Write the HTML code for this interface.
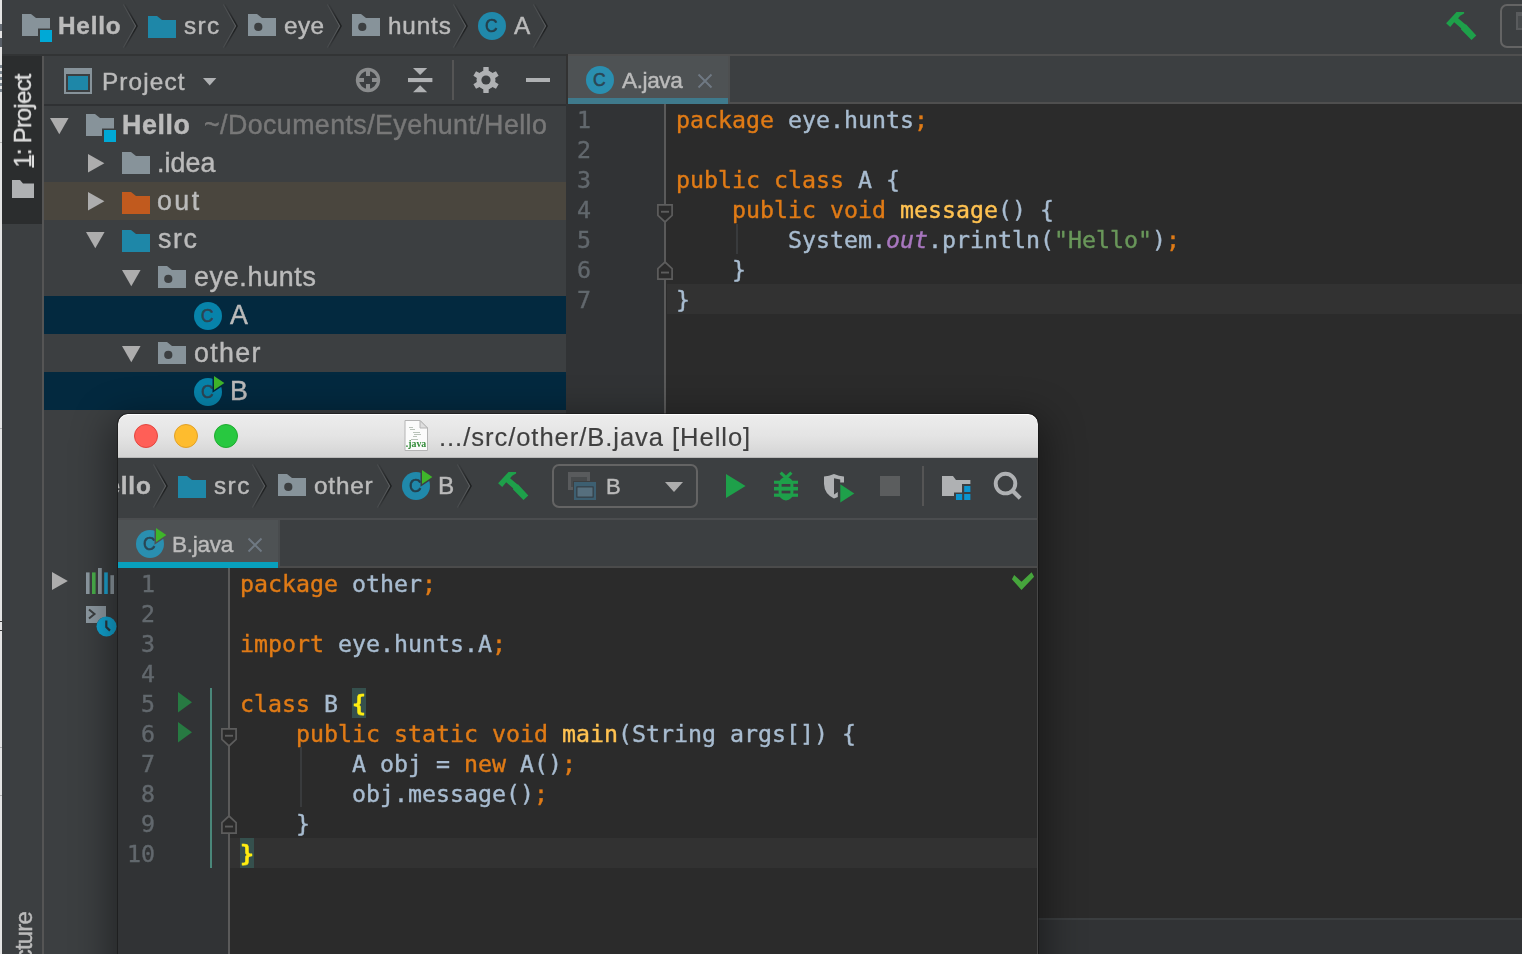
<!DOCTYPE html>
<html lang="en">
<head>
<meta charset="utf-8">
<title>Hello - A.java</title>
<style>
*{box-sizing:border-box;margin:0;padding:0}
html,body{width:1522px;height:954px;overflow:hidden;background:#3c3f41}
body{position:relative;font-family:"Liberation Sans",sans-serif;color:#bbbbbb}
.abs{position:absolute}
.ui{position:absolute;white-space:nowrap;line-height:1;color:#bbbbbb;-webkit-text-stroke:.45px;will-change:transform}
.code,.ln{position:absolute;white-space:pre;font-family:"DejaVu Sans Mono","Liberation Mono",monospace;font-size:23.26px;line-height:30px;height:30px;margin-top:1px}
.code{color:#a8bcd0;-webkit-text-stroke:.4px;will-change:transform}
.ln{color:#62686d;text-align:right;-webkit-text-stroke:.4px;will-change:transform}
.k{color:#e07b16}.m{color:#ffc251}.s{color:#69975a}.f{color:#a877bf;font-style:italic}
.br{color:#ffee10;font-weight:bold;background:#35504d;display:inline-block;height:30px;line-height:30px;vertical-align:top;margin-top:-1px;padding-top:1px}
svg{position:absolute;overflow:visible}
</style>
</head>
<body>
<div id="main" class="abs" style="left:0;top:0;width:1522px;height:954px">
<!-- sliver of another window at the far left edge -->
<div class="abs" style="left:0px;top:0px;width:2px;height:954px;background:#e4e4e4;"></div>
<div class="abs" style="left:0px;top:24px;width:2px;height:7px;background:#6a7078;"></div>
<div class="abs" style="left:0px;top:38px;width:2px;height:9px;background:#5a6068;"></div>
<div class="abs" style="left:0px;top:65px;width:2px;height:3px;background:#7d8790;"></div>
<div class="abs" style="left:0px;top:71px;width:2px;height:3px;background:#7d8790;"></div>
<div class="abs" style="left:0px;top:77px;width:2px;height:3px;background:#7d8790;"></div>
<div class="abs" style="left:0px;top:83px;width:2px;height:3px;background:#7d8790;"></div>
<div class="abs" style="left:0px;top:89px;width:2px;height:3px;background:#7d8790;"></div>
<div class="abs" style="left:0px;top:142px;width:2px;height:1px;background:#b4b4b4;"></div>
<div class="abs" style="left:0px;top:428px;width:2px;height:1px;background:#b4b4b4;"></div>
<div class="abs" style="left:0px;top:621px;width:2px;height:1px;background:#3a3a3a;"></div>
<div class="abs" style="left:0px;top:630px;width:2px;height:1px;background:#3a3a3a;"></div>
<div class="abs" style="left:0px;top:747px;width:2px;height:1px;background:#b4b4b4;"></div>
<div class="abs" style="left:0px;top:795px;width:2px;height:1px;background:#b4b4b4;"></div>
<!-- navbar -->
<div class="abs" style="left:2px;top:54px;width:1520px;height:2px;background:#323435;"></div>
<svg style="left:22px;top:14px" width="30" height="28" viewBox="0 0 30 28"><path d="M0 0H9L14 4H28V14.5H16V22H0Z" fill="#87939a"/><rect x="18" y="16" width="12" height="12" fill="#00a9d6"/></svg>
<div id="n_hello" class="ui" style="left:58.40px;top:13.56px;font-size:24.3px;letter-spacing:0.800px;font-weight:bold">Hello</div>
<svg style="left:122.6px;top:4px" width="16" height="44" viewBox="0 0 16 44"><defs><linearGradient id="cd1" gradientUnits="userSpaceOnUse" x1="0" y1="0" x2="0" y2="44"><stop offset="0" stop-color="#26282a" stop-opacity=".15"/><stop offset=".4" stop-color="#1f2122"/><stop offset=".6" stop-color="#1f2122"/><stop offset="1" stop-color="#26282a" stop-opacity=".15"/></linearGradient><linearGradient id="cl1" gradientUnits="userSpaceOnUse" x1="0" y1="0" x2="0" y2="44"><stop offset="0" stop-color="#55585a" stop-opacity=".5"/><stop offset=".5" stop-color="#5a5d5f"/><stop offset="1" stop-color="#55585a" stop-opacity=".5"/></linearGradient></defs><polyline points="1.7,0.5 13.9,22 1.7,43.5" fill="none" stroke="url(#cd1)" stroke-width="1.8"/><polyline points="0.4,0.5 12.6,22 0.4,43.5" fill="none" stroke="url(#cl1)" stroke-width="1.1"/></svg>
<svg style="left:148px;top:16px" width="28" height="22" viewBox="0 0 28 22"><path d="M0 0H9L14 4H28V22H0Z" fill="#1e87a8"/></svg>
<div id="n_src" class="ui" style="left:184.10px;top:13.57px;font-size:24.3px;letter-spacing:1.349px">src</div>
<svg style="left:223.2px;top:4px" width="16" height="44" viewBox="0 0 16 44"><defs><linearGradient id="cd2" gradientUnits="userSpaceOnUse" x1="0" y1="0" x2="0" y2="44"><stop offset="0" stop-color="#26282a" stop-opacity=".15"/><stop offset=".4" stop-color="#1f2122"/><stop offset=".6" stop-color="#1f2122"/><stop offset="1" stop-color="#26282a" stop-opacity=".15"/></linearGradient><linearGradient id="cl2" gradientUnits="userSpaceOnUse" x1="0" y1="0" x2="0" y2="44"><stop offset="0" stop-color="#55585a" stop-opacity=".5"/><stop offset=".5" stop-color="#5a5d5f"/><stop offset="1" stop-color="#55585a" stop-opacity=".5"/></linearGradient></defs><polyline points="1.7,0.5 13.9,22 1.7,43.5" fill="none" stroke="url(#cd2)" stroke-width="1.8"/><polyline points="0.4,0.5 12.6,22 0.4,43.5" fill="none" stroke="url(#cl2)" stroke-width="1.1"/></svg>
<svg style="left:248px;top:14px" width="28" height="22" viewBox="0 0 28 22"><path d="M0 0H9L14 4H28V22H0Z" fill="#87939a"/><circle cx="10.3" cy="12.9" r="4.1" fill="#3c3f41"/></svg>
<div id="n_eye" class="ui" style="left:284.43px;top:13.57px;font-size:24.3px;letter-spacing:0.368px">eye</div>
<svg style="left:326.6px;top:4px" width="16" height="44" viewBox="0 0 16 44"><defs><linearGradient id="cd3" gradientUnits="userSpaceOnUse" x1="0" y1="0" x2="0" y2="44"><stop offset="0" stop-color="#26282a" stop-opacity=".15"/><stop offset=".4" stop-color="#1f2122"/><stop offset=".6" stop-color="#1f2122"/><stop offset="1" stop-color="#26282a" stop-opacity=".15"/></linearGradient><linearGradient id="cl3" gradientUnits="userSpaceOnUse" x1="0" y1="0" x2="0" y2="44"><stop offset="0" stop-color="#55585a" stop-opacity=".5"/><stop offset=".5" stop-color="#5a5d5f"/><stop offset="1" stop-color="#55585a" stop-opacity=".5"/></linearGradient></defs><polyline points="1.7,0.5 13.9,22 1.7,43.5" fill="none" stroke="url(#cd3)" stroke-width="1.8"/><polyline points="0.4,0.5 12.6,22 0.4,43.5" fill="none" stroke="url(#cl3)" stroke-width="1.1"/></svg>
<svg style="left:352px;top:14px" width="28" height="22" viewBox="0 0 28 22"><path d="M0 0H9L14 4H28V22H0Z" fill="#87939a"/><circle cx="10.3" cy="12.9" r="4.1" fill="#3c3f41"/></svg>
<div id="n_hunts" class="ui" style="left:387.55px;top:13.56px;font-size:24.3px;letter-spacing:0.840px">hunts</div>
<svg style="left:452.8px;top:4px" width="16" height="44" viewBox="0 0 16 44"><defs><linearGradient id="cd4" gradientUnits="userSpaceOnUse" x1="0" y1="0" x2="0" y2="44"><stop offset="0" stop-color="#26282a" stop-opacity=".15"/><stop offset=".4" stop-color="#1f2122"/><stop offset=".6" stop-color="#1f2122"/><stop offset="1" stop-color="#26282a" stop-opacity=".15"/></linearGradient><linearGradient id="cl4" gradientUnits="userSpaceOnUse" x1="0" y1="0" x2="0" y2="44"><stop offset="0" stop-color="#55585a" stop-opacity=".5"/><stop offset=".5" stop-color="#5a5d5f"/><stop offset="1" stop-color="#55585a" stop-opacity=".5"/></linearGradient></defs><polyline points="1.7,0.5 13.9,22 1.7,43.5" fill="none" stroke="url(#cd4)" stroke-width="1.8"/><polyline points="0.4,0.5 12.6,22 0.4,43.5" fill="none" stroke="url(#cl4)" stroke-width="1.1"/></svg>
<svg style="left:478px;top:12px" width="28" height="28" viewBox="0 0 28 28"><circle cx="14" cy="14" r="14" fill="#2089ab"/><text x="13.4" y="20.4" text-anchor="middle" font-family="Liberation Sans, sans-serif" font-size="17.5" fill="#243f4b" stroke="#243f4b" stroke-width=".55">C</text></svg>
<div id="n_A" class="ui" style="left:514.49px;top:13.56px;font-size:24.3px;letter-spacing:0.000px">A</div>
<svg style="left:532.6px;top:4px" width="16" height="44" viewBox="0 0 16 44"><defs><linearGradient id="cd5" gradientUnits="userSpaceOnUse" x1="0" y1="0" x2="0" y2="44"><stop offset="0" stop-color="#26282a" stop-opacity=".15"/><stop offset=".4" stop-color="#1f2122"/><stop offset=".6" stop-color="#1f2122"/><stop offset="1" stop-color="#26282a" stop-opacity=".15"/></linearGradient><linearGradient id="cl5" gradientUnits="userSpaceOnUse" x1="0" y1="0" x2="0" y2="44"><stop offset="0" stop-color="#55585a" stop-opacity=".5"/><stop offset=".5" stop-color="#5a5d5f"/><stop offset="1" stop-color="#55585a" stop-opacity=".5"/></linearGradient></defs><polyline points="1.7,0.5 13.9,22 1.7,43.5" fill="none" stroke="url(#cd5)" stroke-width="1.8"/><polyline points="0.4,0.5 12.6,22 0.4,43.5" fill="none" stroke="url(#cl5)" stroke-width="1.1"/></svg>
<svg style="left:1446px;top:12px" width="30" height="28" viewBox="0 0 30 28"><path d="M0.1 11.2L10.5 0.1H18.1V1.5L14.2 3.8L12.1 6.3L19.2 12.3L20.2 12.5L30.3 23.4L25.5 28L15.1 17.6V16.2L8.2 10.2L4.2 15.1Z" fill="#1ea04a"/></svg>
<div class="abs" style="left:1500px;top:4px;width:60px;height:44px;border:2px solid #646464;border-radius:7px"></div>
<div class="abs" style="left:1516px;top:12px;width:22px;height:18px;border:2px solid #595b5d;border-top-width:4px;background:#474a4c"></div>
<!-- left tool strip -->
<div class="abs" style="left:2px;top:56px;width:40px;height:168px;background:#2b2d2e;"></div>
<div class="abs" style="left:42px;top:56px;width:2px;height:898px;background:#555555;"></div>
<div id="v_project" class="ui" style="left:23.4px;top:121px;font-size:24px;color:#dedede;-webkit-text-stroke:.4px;transform:translate(-50%,-50%) rotate(-90deg);letter-spacing:-.82px"><span style="text-decoration:underline;text-underline-offset:.6px;text-decoration-thickness:1.6px">1</span>: Project</div>
<svg style="left:12px;top:180px" width="22" height="18" viewBox="0 0 22 18"><path d="M0 0H8L11 3.5H22V18H0Z" fill="#afb1b3"/></svg>
<div id="v_struct" class="ui" style="left:23.6px;top:957px;font-size:24px;color:#bbbbbb;transform:translate(-50%,-50%) rotate(-90deg);letter-spacing:-.82px">Structure</div>
<!-- project panel -->
<div class="abs" style="left:44px;top:104px;width:522px;height:2px;background:#2f3133;"></div>
<svg style="left:64px;top:68px" width="28" height="26" viewBox="0 0 28 26"><rect x="0" y="0" width="28" height="26" fill="#87939a"/><rect x="2" y="6" width="24" height="18" fill="#3c3f41"/><rect x="4" y="8" width="20" height="14" fill="#1e87a8"/></svg>
<div id="h_project" class="ui" style="left:101.81px;top:69.67px;font-size:24.3px;letter-spacing:1.145px">Project</div>
<svg style="left:203.3px;top:77.6px" width="13.4" height="7.4" viewBox="0 0 13.4 7.4"><path d="M0 0H13.4L6.7 7.4Z" fill="#afb1b3"/></svg>
<svg style="left:0;top:0" width="10" height="10"><circle cx="368" cy="80" r="10.6" fill="none" stroke="#8a8c8d" stroke-width="3.2"/><g stroke="#8a8c8d" stroke-width="4"><line x1="368" y1="69" x2="368" y2="76"/><line x1="368" y1="91" x2="368" y2="84"/><line x1="357" y1="80" x2="364" y2="80"/><line x1="379" y1="80" x2="372" y2="80"/></g></svg>
<svg style="left:407.9px;top:67.8px" width="24.4" height="24.5" viewBox="0 0 24.4 24.5"><g fill="#afb1b3"><rect x="0" y="10" width="24.4" height="4.1"/><path d="M5 0H19.2L12.1 7Z"/><path d="M5 24.3H19.2L12.1 17.3Z"/></g></svg>
<div class="abs" style="left:452px;top:60px;width:2px;height:40px;background:#555555;"></div>
<svg style="left:0;top:0" width="10" height="10"><path d="M483.22 71.02L483.36 66.97L488.64 66.97L488.78 71.02L492.39 73.10L495.97 71.19L498.61 75.77L495.17 77.92L495.17 82.08L498.61 84.23L495.97 88.81L492.39 86.90L488.78 88.98L488.64 93.03L483.36 93.03L483.22 88.98L479.61 86.90L476.03 88.81L473.39 84.23L476.83 82.08L476.83 77.92L473.39 75.77L476.03 71.19L479.61 73.10Z" fill="#afb1b3"/><circle cx="486" cy="80" r="9.4" fill="#afb1b3"/><circle cx="486" cy="80" r="4.6" fill="#3c3f41"/></svg>
<div class="abs" style="left:525.7px;top:77.8px;width:24.5px;height:4.2px;background:#afb1b3;"></div>
<div class="abs" style="left:44px;top:182px;width:522px;height:38px;background:#4a463e;"></div>
<div class="abs" style="left:44px;top:296px;width:522px;height:38px;background:#03293f;"></div>
<div class="abs" style="left:44px;top:372px;width:522px;height:38px;background:#03293f;"></div>
<svg style="left:49.7px;top:117.9px" width="18.6" height="16.2" viewBox="0 0 18.6 16.2"><path d="M0 0H18.6L9.3 16.2Z" fill="#adadad"/></svg>
<svg style="left:86px;top:114px" width="30" height="28" viewBox="0 0 30 28"><path d="M0 0H9L14 4H28V14.5H16V22H0Z" fill="#87939a"/><rect x="18" y="16" width="12" height="12" fill="#00a9d6"/></svg>
<div id="t_hello" class="ui" style="left:122.07px;top:111.66px;font-size:26.8px;letter-spacing:0.594px;font-weight:bold">Hello</div>
<div id="t_path" class="ui" style="left:203.51px;top:111.66px;font-size:26.8px;letter-spacing:0.414px;color:#787878">~/Documents/Eyehunt/Hello</div>
<svg style="left:87.8px;top:153.8px" width="16.4" height="18.6" viewBox="0 0 16.4 18.6"><path d="M0 0L16.4 9.3L0 18.6Z" fill="#adadad"/></svg>
<svg style="left:122px;top:152px" width="28" height="22" viewBox="0 0 28 22"><path d="M0 0H9L14 4H28V22H0Z" fill="#87939a"/></svg>
<div id="t_idea" class="ui" style="left:157.40px;top:149.66px;font-size:26.8px;letter-spacing:0.062px">.idea</div>
<svg style="left:87.8px;top:191.8px" width="16.4" height="18.6" viewBox="0 0 16.4 18.6"><path d="M0 0L16.4 9.3L0 18.6Z" fill="#adadad"/></svg>
<svg style="left:122px;top:192px" width="28" height="22" viewBox="0 0 28 22"><path d="M0 0H9L14 4H28V22H0Z" fill="#c15a1e"/></svg>
<div id="t_out" class="ui" style="left:157.46px;top:187.66px;font-size:26.8px;letter-spacing:2.412px">out</div>
<svg style="left:85.7px;top:231.9px" width="18.6" height="16.2" viewBox="0 0 18.6 16.2"><path d="M0 0H18.6L9.3 16.2Z" fill="#adadad"/></svg>
<svg style="left:122px;top:230px" width="28" height="22" viewBox="0 0 28 22"><path d="M0 0H9L14 4H28V22H0Z" fill="#1e87a8"/></svg>
<div id="t_src" class="ui" style="left:157.80px;top:225.56px;font-size:26.8px;letter-spacing:1.638px">src</div>
<svg style="left:121.7px;top:269.9px" width="18.6" height="16.2" viewBox="0 0 18.6 16.2"><path d="M0 0H18.6L9.3 16.2Z" fill="#adadad"/></svg>
<svg style="left:158px;top:266px" width="28" height="22" viewBox="0 0 28 22"><path d="M0 0H9L14 4H28V22H0Z" fill="#87939a"/><circle cx="10.3" cy="12.9" r="4.1" fill="#3c3f41"/></svg>
<div id="t_eyeh" class="ui" style="left:194.02px;top:263.66px;font-size:26.8px;letter-spacing:0.715px">eye.hunts</div>
<svg style="left:194px;top:302px" width="28" height="28" viewBox="0 0 28 28"><circle cx="14" cy="14" r="14" fill="#0783aa"/><text x="13.4" y="20.4" text-anchor="middle" font-family="Liberation Sans, sans-serif" font-size="17.5" fill="#2d4553" stroke="#2d4553" stroke-width=".55">C</text></svg>
<div id="t_A" class="ui" style="left:229.51px;top:301.66px;font-size:26.8px;letter-spacing:0.000px">A</div>
<svg style="left:121.7px;top:345.9px" width="18.6" height="16.2" viewBox="0 0 18.6 16.2"><path d="M0 0H18.6L9.3 16.2Z" fill="#adadad"/></svg>
<svg style="left:158px;top:342px" width="28" height="22" viewBox="0 0 28 22"><path d="M0 0H9L14 4H28V22H0Z" fill="#87939a"/><circle cx="10.3" cy="12.9" r="4.1" fill="#3c3f41"/></svg>
<div id="t_other" class="ui" style="left:194.07px;top:339.66px;font-size:26.8px;letter-spacing:1.350px">other</div>
<svg style="left:194px;top:378px" width="28" height="28" viewBox="0 0 28 28"><defs><mask id="rm3" maskUnits="userSpaceOnUse" x="-2" y="-4" width="36" height="36"><rect x="-2" y="-4" width="36" height="36" fill="#fff"/><path d="M20 -2L30.4 5L20 12Z" fill="#000" stroke="#000" stroke-width="3" stroke-linejoin="miter"/></mask></defs><g mask="url(#rm3)"><circle cx="14" cy="14" r="14" fill="#0783aa"/><text x="13.4" y="20.4" text-anchor="middle" font-family="Liberation Sans, sans-serif" font-size="17.5" fill="#2d4553" stroke="#2d4553" stroke-width=".55">C</text></g><path d="M20 -2L30.4 5L20 12Z" fill="#3fb52a"/></svg>
<div id="t_B" class="ui" style="left:230.32px;top:377.66px;font-size:26.8px;letter-spacing:0.000px">B</div>
<svg style="left:51.8px;top:572px" width="15.8" height="18" viewBox="0 0 15.8 18"><path d="M0 0L15.8 9.0L0 18Z" fill="#adadad"/></svg>
<svg style="left:86px;top:568px" width="28" height="26" viewBox="0 0 28 26"><rect x="0" y="4.4" width="3.6" height="21.6" fill="#8e9aa2"/><rect x="6" y="4.4" width="3.6" height="21.6" fill="#4ab04b"/><rect x="12" y="0" width="3.8" height="26" fill="#8e9aa2"/><rect x="18.2" y="4.4" width="3.6" height="21.6" fill="#1fa4d0"/><rect x="24.4" y="7.2" width="3.6" height="18.8" fill="#8e9aa2"/></svg>
<svg style="left:86px;top:606px" width="31" height="31" viewBox="0 0 31 31"><path d="M0 0H20V11A10 10 0 0 0 11 17H0Z" fill="#8e9aa2"/><path d="M3 3.5L8.5 8 3 12.5" fill="none" stroke="#3c3f41" stroke-width="2"/><circle cx="20.5" cy="20.5" r="10" fill="#12a6d4"/><path d="M20.3 14.5V21L24 24.6" fill="none" stroke="#2b3a42" stroke-width="2.2"/></svg>
<!-- editor tabs -->
<div class="abs" style="left:568px;top:54px;width:954px;height:2px;background:#4f4f4f;"></div>
<div class="abs" style="left:566px;top:54px;width:2px;height:50px;background:#323232;"></div>
<div class="abs" style="left:568px;top:56px;width:160px;height:48px;background:#4e5254;"></div>
<div class="abs" style="left:568px;top:98px;width:160px;height:6px;background:#3f7a8c;"></div>
<div class="abs" style="left:728px;top:56px;width:2px;height:48px;background:#4d4f50;"></div>
<div class="abs" style="left:730px;top:102px;width:792px;height:2px;background:#4f4f4f;"></div>
<svg style="left:586px;top:66px" width="28" height="28" viewBox="0 0 28 28"><circle cx="14" cy="14" r="14" fill="#2a8fb0"/><text x="13.4" y="20.4" text-anchor="middle" font-family="Liberation Sans, sans-serif" font-size="17.5" fill="#2a4654" stroke="#2a4654" stroke-width=".55">C</text></svg>
<div id="tab_a" class="ui" style="left:621.85px;top:69.83px;font-size:22.6px;letter-spacing:-0.393px">A.java</div>
<svg style="left:698px;top:74px" width="14" height="14" viewBox="0 0 14 14"><path d="M0.5 0.5L13.5 13.5M13.5 0.5L0.5 13.5" stroke="#6f7983" stroke-width="1.9" fill="none"/></svg>
<!-- editor -->
<div class="abs" style="left:566px;top:104px;width:956px;height:814px;background:#2b2b2b;"></div>
<div class="abs" style="left:566px;top:104px;width:98px;height:814px;background:#313335;"></div>
<div class="abs" style="left:664px;top:104px;width:2px;height:814px;background:#5a5a5a;"></div>
<div class="abs" style="left:667px;top:284px;width:855px;height:30px;background:#323232;"></div>
<div class="ln" style="left:531px;width:60px;top:104px">1</div>
<div class="code" style="left:676px;top:104px"><span class="k">package </span>eye.hunts<span class="k">;</span></div>
<div class="ln" style="left:531px;width:60px;top:134px">2</div>
<div class="ln" style="left:531px;width:60px;top:164px">3</div>
<div class="code" style="left:676px;top:164px"><span class="k">public class </span>A {</div>
<div class="ln" style="left:531px;width:60px;top:194px">4</div>
<div class="code" style="left:676px;top:194px">    <span class="k">public void </span><span class="m">message</span>() {</div>
<div class="ln" style="left:531px;width:60px;top:224px">5</div>
<div class="code" style="left:676px;top:224px">        System.<span class="f">out</span>.println(<span class="s">"Hello"</span>)<span class="k">;</span></div>
<div class="ln" style="left:531px;width:60px;top:254px">6</div>
<div class="code" style="left:676px;top:254px">    }</div>
<div class="ln" style="left:531px;width:60px;top:284px">7</div>
<div class="code" style="left:676px;top:284px">}</div>
<div class="abs" style="left:736px;top:224px;width:2px;height:30px;background:#393b3d;"></div>
<svg style="left:657px;top:204px" width="16" height="19" viewBox="0 0 16 19"><path d="M0.9 0.9H15.1V11.5L8 18L0.9 11.5Z" fill="#2b2b2b" stroke="#5d5d5d" stroke-width="1.7"/><rect x="4" y="6.8" width="8" height="1.9" fill="#5d5d5d"/></svg>
<svg style="left:657px;top:261px" width="16" height="19" viewBox="0 0 16 19"><path d="M0.9 18.1H15.1V7.5L8 1L0.9 7.5Z" fill="#2b2b2b" stroke="#5d5d5d" stroke-width="1.7"/><rect x="4" y="10.6" width="8" height="1.9" fill="#5d5d5d"/></svg>
<!-- bottom bar -->
<div class="abs" style="left:566px;top:918px;width:956px;height:36px;background:#313335;"></div>
<div class="abs" style="left:566px;top:918px;width:956px;height:2px;background:#3b3e40;"></div>
</div>
<div id="fw" class="abs" style="left:118px;top:414px;width:920px;height:560px;border-radius:10px 10px 0 0;box-shadow:0 0 0 1px rgba(20,20,20,.55),0 12px 38px 8px rgba(0,0,0,.42);background:#2b2b2b;overflow:hidden">
<div class="abs" style="left:0px;top:0px;width:920px;height:44px;background:linear-gradient(#ededed,#e4e4e4 50%,#d3d3d3);border-radius:10px 10px 0 0;box-shadow:inset 0 1px 0 rgba(255,255,255,.95)"></div>
<div class="abs" style="left:0px;top:43px;width:920px;height:1px;background:#b9b9b9;"></div>
<div class="abs" style="left:16px;top:10px;width:24px;height:24px;border-radius:50%;background:#ff5f57;border:1px solid #e2463f"></div>
<div class="abs" style="left:56px;top:10px;width:24px;height:24px;border-radius:50%;background:#febc2e;border:1px solid #e0a028"></div>
<div class="abs" style="left:96px;top:10px;width:24px;height:24px;border-radius:50%;background:#28c840;border:1px solid #1fab2f"></div>
<svg style="left:286px;top:6px" width="24" height="31" viewBox="0 0 24 31"><path d="M1 0.5H16L23.5 8V30.5H1Z" fill="#fbfbfb" stroke="#b4b4b4" stroke-width="1"/><path d="M16 0.5V8H23.5Z" fill="#dedede" stroke="#b4b4b4" stroke-width="1"/><g stroke="#b9c2b9" stroke-width="1"><path d="M5 7.5H9M6 9.5H11M9 12.5H16M10 14.5H17M9 16.5H13M7 19.5H14"/></g><text x="12" y="27.3" text-anchor="middle" font-family="Liberation Serif, serif" font-weight="bold" font-size="9.8" fill="#2f8a35">.java</text></svg>
<div class="abs" style="left:0px;top:44px;width:920px;height:60px;background:#3c3f41;"></div>
<div class="abs" style="left:0px;top:104px;width:920px;height:2px;background:#4b4d4f;"></div>
<svg style="left:-66px;top:60px" width="30" height="28" viewBox="0 0 30 28"><path d="M0 0H9L14 4H28V14.5H16V22H0Z" fill="#87939a"/><rect x="18" y="16" width="12" height="12" fill="#00a9d6"/></svg>
<svg style="left:34.99999999999999px;top:50px" width="16" height="44" viewBox="0 0 16 44"><defs><linearGradient id="cd6" gradientUnits="userSpaceOnUse" x1="0" y1="0" x2="0" y2="44"><stop offset="0" stop-color="#26282a" stop-opacity=".15"/><stop offset=".4" stop-color="#1f2122"/><stop offset=".6" stop-color="#1f2122"/><stop offset="1" stop-color="#26282a" stop-opacity=".15"/></linearGradient><linearGradient id="cl6" gradientUnits="userSpaceOnUse" x1="0" y1="0" x2="0" y2="44"><stop offset="0" stop-color="#55585a" stop-opacity=".5"/><stop offset=".5" stop-color="#5a5d5f"/><stop offset="1" stop-color="#55585a" stop-opacity=".5"/></linearGradient></defs><polyline points="1.7,0.5 13.9,22 1.7,43.5" fill="none" stroke="url(#cd6)" stroke-width="1.8"/><polyline points="0.4,0.5 12.6,22 0.4,43.5" fill="none" stroke="url(#cl6)" stroke-width="1.1"/></svg>
<svg style="left:60px;top:62px" width="28" height="22" viewBox="0 0 28 22"><path d="M0 0H9L14 4H28V22H0Z" fill="#1e87a8"/></svg>
<svg style="left:134.4px;top:50px" width="16" height="44" viewBox="0 0 16 44"><defs><linearGradient id="cd7" gradientUnits="userSpaceOnUse" x1="0" y1="0" x2="0" y2="44"><stop offset="0" stop-color="#26282a" stop-opacity=".15"/><stop offset=".4" stop-color="#1f2122"/><stop offset=".6" stop-color="#1f2122"/><stop offset="1" stop-color="#26282a" stop-opacity=".15"/></linearGradient><linearGradient id="cl7" gradientUnits="userSpaceOnUse" x1="0" y1="0" x2="0" y2="44"><stop offset="0" stop-color="#55585a" stop-opacity=".5"/><stop offset=".5" stop-color="#5a5d5f"/><stop offset="1" stop-color="#55585a" stop-opacity=".5"/></linearGradient></defs><polyline points="1.7,0.5 13.9,22 1.7,43.5" fill="none" stroke="url(#cd7)" stroke-width="1.8"/><polyline points="0.4,0.5 12.6,22 0.4,43.5" fill="none" stroke="url(#cl7)" stroke-width="1.1"/></svg>
<svg style="left:160px;top:60px" width="28" height="22" viewBox="0 0 28 22"><path d="M0 0H9L14 4H28V22H0Z" fill="#87939a"/><circle cx="10.3" cy="12.9" r="4.1" fill="#3c3f41"/></svg>
<svg style="left:258.6px;top:50px" width="16" height="44" viewBox="0 0 16 44"><defs><linearGradient id="cd8" gradientUnits="userSpaceOnUse" x1="0" y1="0" x2="0" y2="44"><stop offset="0" stop-color="#26282a" stop-opacity=".15"/><stop offset=".4" stop-color="#1f2122"/><stop offset=".6" stop-color="#1f2122"/><stop offset="1" stop-color="#26282a" stop-opacity=".15"/></linearGradient><linearGradient id="cl8" gradientUnits="userSpaceOnUse" x1="0" y1="0" x2="0" y2="44"><stop offset="0" stop-color="#55585a" stop-opacity=".5"/><stop offset=".5" stop-color="#5a5d5f"/><stop offset="1" stop-color="#55585a" stop-opacity=".5"/></linearGradient></defs><polyline points="1.7,0.5 13.9,22 1.7,43.5" fill="none" stroke="url(#cd8)" stroke-width="1.8"/><polyline points="0.4,0.5 12.6,22 0.4,43.5" fill="none" stroke="url(#cl8)" stroke-width="1.1"/></svg>
<svg style="left:284px;top:58px" width="28" height="28" viewBox="0 0 28 28"><defs><mask id="rm5" maskUnits="userSpaceOnUse" x="-2" y="-4" width="36" height="36"><rect x="-2" y="-4" width="36" height="36" fill="#fff"/><path d="M20 -2L30.4 5L20 12Z" fill="#000" stroke="#000" stroke-width="3" stroke-linejoin="miter"/></mask></defs><g mask="url(#rm5)"><circle cx="14" cy="14" r="14" fill="#2089ab"/><text x="13.4" y="20.4" text-anchor="middle" font-family="Liberation Sans, sans-serif" font-size="17.5" fill="#243f4b" stroke="#243f4b" stroke-width=".55">C</text></g><path d="M20 -2L30.4 5L20 12Z" fill="#3fb52a"/></svg>
<svg style="left:338.6px;top:50px" width="16" height="44" viewBox="0 0 16 44"><defs><linearGradient id="cd9" gradientUnits="userSpaceOnUse" x1="0" y1="0" x2="0" y2="44"><stop offset="0" stop-color="#26282a" stop-opacity=".15"/><stop offset=".4" stop-color="#1f2122"/><stop offset=".6" stop-color="#1f2122"/><stop offset="1" stop-color="#26282a" stop-opacity=".15"/></linearGradient><linearGradient id="cl9" gradientUnits="userSpaceOnUse" x1="0" y1="0" x2="0" y2="44"><stop offset="0" stop-color="#55585a" stop-opacity=".5"/><stop offset=".5" stop-color="#5a5d5f"/><stop offset="1" stop-color="#55585a" stop-opacity=".5"/></linearGradient></defs><polyline points="1.7,0.5 13.9,22 1.7,43.5" fill="none" stroke="url(#cd9)" stroke-width="1.8"/><polyline points="0.4,0.5 12.6,22 0.4,43.5" fill="none" stroke="url(#cl9)" stroke-width="1.1"/></svg>
<svg style="left:380px;top:58px" width="30" height="28" viewBox="0 0 30 28"><path d="M0.1 11.2L10.5 0.1H18.1V1.5L14.2 3.8L12.1 6.3L19.2 12.3L20.2 12.5L30.3 23.4L25.5 28L15.1 17.6V16.2L8.2 10.2L4.2 15.1Z" fill="#1ea04a"/></svg>
<div class="abs" style="left:434px;top:50px;width:146px;height:44px;border:2px solid #646464;border-radius:7px"></div>
<svg style="left:450px;top:58px" width="28" height="28" viewBox="0 0 28 28"><rect x="0" y="0" width="22" height="18" fill="#595b5d"/><rect x="3" y="5" width="16" height="10" fill="#474a4c"/><rect x="5" y="9" width="24" height="20" fill="#3c3f41"/><rect x="6" y="10" width="22" height="18" fill="#3d5f71"/><rect x="8.4" y="14.4" width="17.2" height="11.2" fill="#32383c"/><rect x="9.4" y="15.4" width="15.2" height="9.2" fill="#566f7e"/></svg>
<svg style="left:547px;top:68px" width="18" height="10" viewBox="0 0 18 10"><path d="M0 0H18L9.0 10Z" fill="#adadad"/></svg>
<svg style="left:607.8px;top:60px" width="19.6" height="24" viewBox="0 0 19.6 24"><path d="M0 0L19.6 12.0L0 24Z" fill="#1ea04a"/></svg>
<svg style="left:656px;top:58px" width="24" height="28.4" viewBox="0 0 24 28.4"><g fill="#1ea04a"><path d="M6.6 0.6L12 5.6L17.4 0.6" fill="none" stroke="#1ea04a" stroke-width="3.2"/><path d="M4.6 12.6A7.4 7.6 0 0 1 19.4 12.6V20.4A7.4 8 0 0 1 4.6 20.4Z"/><rect x="0" y="8.7" width="24" height="3.1"/><rect x="0" y="14.9" width="24" height="3.6"/><rect x="0" y="21.6" width="24" height="3.2"/></g><rect x="7.6" y="12" width="8.8" height="2.7" fill="#3c3f41"/><rect x="7.6" y="18.7" width="8.8" height="2.7" fill="#3c3f41"/></svg>
<svg style="left:705.6px;top:59.60000000000002px" width="31" height="29" viewBox="0 0 31 29"><path d="M0 2.6Q5 2.4 10 0Q15 2.4 20 2.6V8.6H16.2V5.6L10 4.2V20.4L13.8 18V23Q12 24 10 24.4Q0.4 20 0 10Z" fill="#afb1b3"/><path d="M16.3 10.2L30.3 19.4L16.3 28.5Z" fill="#1ea04a"/></svg>
<div class="abs" style="left:762px;top:62px;width:20px;height:20px;background:#5b5d5e;"></div>
<div class="abs" style="left:804px;top:52px;width:2px;height:40px;background:#555555;"></div>
<svg style="left:824px;top:62px" width="28.4" height="24" viewBox="0 0 28.4 24"><path d="M0 0H11L14 4H28.4V8H20V16.4H12V20H0Z" fill="#afb1b3"/><g fill="#0b95d0"><rect x="22.2" y="10" width="6.2" height="6"/><rect x="14" y="18" width="6.2" height="6"/><rect x="22.2" y="18" width="6.2" height="6"/></g></svg>
<svg style="left:874px;top:56px" width="32" height="32" viewBox="0 0 32 32"><circle cx="13.5" cy="13.6" r="9.8" fill="none" stroke="#afb1b3" stroke-width="3.9"/><path d="M20.4 20.6L28.2 28.2" stroke="#afb1b3" stroke-width="4.2" fill="none"/></svg>
<div class="abs" style="left:0px;top:106px;width:920px;height:48px;background:#3c3f41;"></div>
<div class="abs" style="left:160px;top:152px;width:760px;height:2px;background:#4b4b4b;"></div>
<div class="abs" style="left:0px;top:106px;width:160px;height:48px;background:#4e5254;"></div>
<div class="abs" style="left:0px;top:148px;width:160px;height:6px;background:#08a0bd;"></div>
<div class="abs" style="left:160px;top:106px;width:2px;height:46px;background:#494c4e;"></div>
<svg style="left:18px;top:116px" width="28" height="28" viewBox="0 0 28 28"><defs><mask id="rm6" maskUnits="userSpaceOnUse" x="-2" y="-4" width="36" height="36"><rect x="-2" y="-4" width="36" height="36" fill="#fff"/><path d="M20 -2L30.4 5L20 12Z" fill="#000" stroke="#000" stroke-width="3" stroke-linejoin="miter"/></mask></defs><g mask="url(#rm6)"><circle cx="14" cy="14" r="14" fill="#2a8fb0"/><text x="13.4" y="20.4" text-anchor="middle" font-family="Liberation Sans, sans-serif" font-size="17.5" fill="#2a4654" stroke="#2a4654" stroke-width=".55">C</text></g><path d="M20 -2L30.4 5L20 12Z" fill="#3fb52a"/></svg>
<svg style="left:130px;top:124px" width="14" height="14" viewBox="0 0 14 14"><path d="M0.5 0.5L13.5 13.5M13.5 0.5L0.5 13.5" stroke="#6f7983" stroke-width="1.9" fill="none"/></svg>
<div class="abs" style="left:0px;top:154px;width:920px;height:420px;background:#2b2b2b;"></div>
<div class="abs" style="left:0px;top:154px;width:110px;height:420px;background:#313335;"></div>
<div class="abs" style="left:110px;top:154px;width:2px;height:420px;background:#5a5a5a;"></div>
<div class="abs" style="left:112px;top:424px;width:920px;height:30px;background:#323232;"></div>
<div class="ln" style="left:-23.19999999999999px;width:60px;top:154px">1</div>
<div class="code" style="left:122px;top:154px"><span class="k">package </span>other<span class="k">;</span></div>
<div class="ln" style="left:-23.19999999999999px;width:60px;top:184px">2</div>
<div class="ln" style="left:-23.19999999999999px;width:60px;top:214px">3</div>
<div class="code" style="left:122px;top:214px"><span class="k">import </span>eye.hunts.A<span class="k">;</span></div>
<div class="ln" style="left:-23.19999999999999px;width:60px;top:244px">4</div>
<div class="ln" style="left:-23.19999999999999px;width:60px;top:274px">5</div>
<div class="code" style="left:122px;top:274px"><span class="k">class </span>B <span class="br">{</span></div>
<div class="ln" style="left:-23.19999999999999px;width:60px;top:304px">6</div>
<div class="code" style="left:122px;top:304px">    <span class="k">public static void </span><span class="m">main</span>(String args[]) {</div>
<div class="ln" style="left:-23.19999999999999px;width:60px;top:334px">7</div>
<div class="code" style="left:122px;top:334px">        A obj = <span class="k">new </span>A()<span class="k">;</span></div>
<div class="ln" style="left:-23.19999999999999px;width:60px;top:364px">8</div>
<div class="code" style="left:122px;top:364px">        obj.message()<span class="k">;</span></div>
<div class="ln" style="left:-23.19999999999999px;width:60px;top:394px">9</div>
<div class="code" style="left:122px;top:394px">    }</div>
<div class="ln" style="left:-23.19999999999999px;width:60px;top:424px">10</div>
<div class="code" style="left:122px;top:424px"><span class="br">}</span></div>
<svg style="left:60px;top:277.8px" width="14" height="20.6" viewBox="0 0 14 20.6"><path d="M0 0L14 10.3L0 20.6Z" fill="#277a42"/></svg>
<svg style="left:60px;top:307.8px" width="14" height="20.6" viewBox="0 0 14 20.6"><path d="M0 0L14 10.3L0 20.6Z" fill="#277a42"/></svg>
<div class="abs" style="left:92px;top:274px;width:2px;height:180px;background:#4a877a;"></div>
<div class="abs" style="left:182px;top:333px;width:2px;height:60px;background:#393b3d;"></div>
<svg style="left:103px;top:314px" width="16" height="19" viewBox="0 0 16 19"><path d="M0.9 0.9H15.1V11.5L8 18L0.9 11.5Z" fill="#2b2b2b" stroke="#5d5d5d" stroke-width="1.7"/><rect x="4" y="6.8" width="8" height="1.9" fill="#5d5d5d"/></svg>
<svg style="left:103px;top:401px" width="16" height="19" viewBox="0 0 16 19"><path d="M0.9 18.1H15.1V7.5L8 1L0.9 7.5Z" fill="#2b2b2b" stroke="#5d5d5d" stroke-width="1.7"/><rect x="4" y="10.6" width="8" height="1.9" fill="#5d5d5d"/></svg>
<svg style="left:894px;top:158px" width="23" height="18" viewBox="0 0 23 18"><path d="M2.2 2.9L-0.1 7.3L9.5 18L22.1 4.8L19.6 0.2L9.5 9.8Z" fill="#46a53c"/></svg>
<div class="abs" style="left:919px;top:44px;width:1px;height:520px;background:#474747;"></div>
<div class="abs" style="left:-118px;top:-414px;width:0;height:0"><div id="f_title" class="ui" style="left:439.46px;top:424.52px;font-size:25.6px;letter-spacing:0.938px;color:#404040;-webkit-text-stroke:.15px">.../src/other/B.java [Hello]</div>
<div id="f_hello" class="ui" style="left:87.63px;top:473.56px;font-size:24.3px;letter-spacing:0.838px;font-weight:bold">Hello</div>
<div id="f_src" class="ui" style="left:213.74px;top:473.58px;font-size:24.3px;letter-spacing:1.457px">src</div>
<div id="f_other" class="ui" style="left:313.62px;top:473.56px;font-size:24.3px;letter-spacing:0.814px">other</div>
<div id="f_B" class="ui" style="left:437.81px;top:473.56px;font-size:24.3px;letter-spacing:0.000px">B</div>
<div id="f_combo" class="ui" style="left:606.33px;top:475.62px;font-size:22.0px;letter-spacing:0.000px">B</div>
<div id="f_tab" class="ui" style="left:172.46px;top:533.94px;font-size:22.6px;letter-spacing:-0.293px">B.java</div></div>
</div>
</body>
</html>
